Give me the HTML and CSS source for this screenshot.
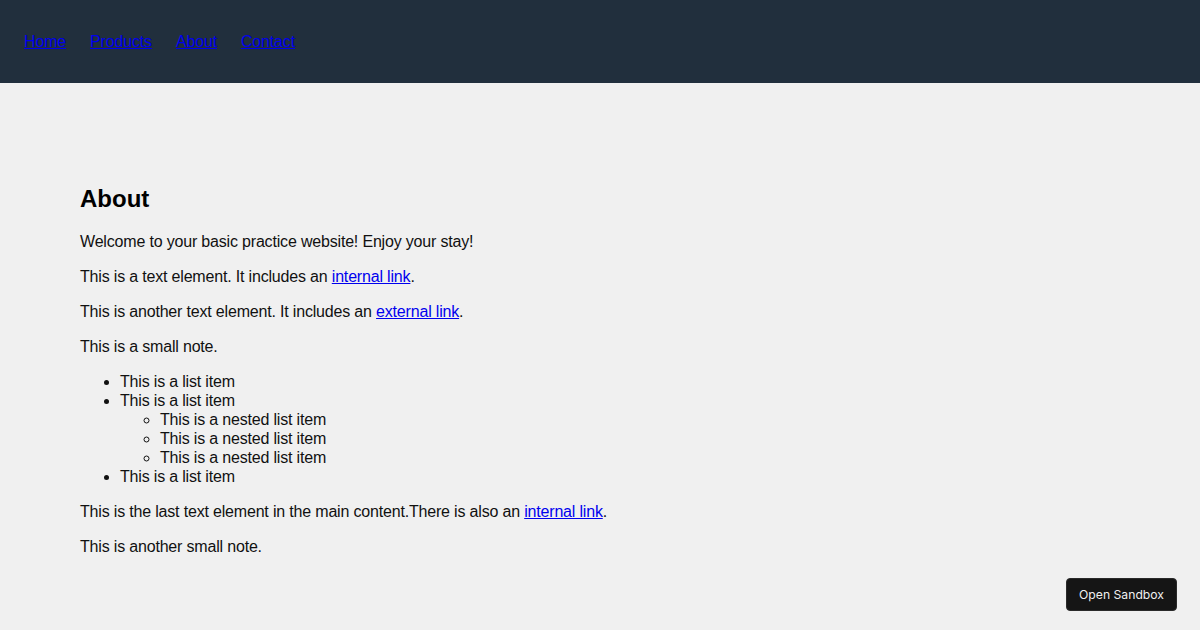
FILE: index.html
```html
<!DOCTYPE html>
<html lang="en">
<head>
<meta charset="utf-8">
<title>About</title>
<link rel="stylesheet" href="styles.css">
</head>
<body>
<header class="site-header">
  <nav class="nav">
    <a href="#">Home</a>
    <a href="#">Products</a>
    <a href="#">About</a>
    <a href="#">Contact</a>
  </nav>
</header>
<main class="content">
  <h2 class="title">About</h2>
  <p>Welcome to your basic practice website! Enjoy your stay!</p>
  <p>This is a text element. It includes an <a href="#">internal link</a>.</p>
  <p>This is another text element. It includes an <a href="#">external link</a>.</p>
  <p>This is a small note.</p>
  <ul class="list">
    <li>This is a list item</li>
    <li>This is a list item
      <ul class="nested">
        <li>This is a nested list item</li>
        <li>This is a nested list item</li>
        <li>This is a nested list item</li>
      </ul>
    </li>
    <li>This is a list item</li>
  </ul>
  <p>This is the last text element in the main content.There is also an <a href="#">internal link</a>.</p>
  <p>This is another small note.</p>
</main>
<a class="sandbox-btn" href="#">Open Sandbox</a>
</body>
</html>
```
FILE: styles.css
```css
html, body {
  margin: 0;
  padding: 0;
}
body {
  background: #f0f0f0;
  color: #111;
  font-family: "Liberation Sans", Arial, sans-serif;
  font-size: 16px;
  line-height: 19px;
  letter-spacing: -0.18px;
}
a {
  color: #0000ee;
}
.site-header {
  background: #212f3d;
  padding: 32px 24px;
  height: 19px;
}
.nav {
  display: flex;
  gap: 24px;
  line-height: 19px;
  letter-spacing: -0.16px;
}
.content {
  padding: 82px 80px 80px;
}
.title {
  font-size: 24px;
  line-height: 27.6px;
  font-weight: bold;
  letter-spacing: 0;
  margin: 19.9px 0;
  color: #000;
}
.content p {
  margin: 16px 0;
}
.list {
  margin: 16px 0;
  padding-left: 40px;
}
.nested {
  margin: 0;
  padding-left: 40px;
  list-style-type: circle;
}
.sandbox-btn {
  position: fixed;
  right: 23px;
  bottom: 19px;
  background: #151515;
  color: #f0f0f0;
  text-decoration: none;
  letter-spacing: 0;
  font-family: Inter, "Liberation Sans", sans-serif;
  font-size: 12.2px;
  line-height: 15px;
  padding: 8px 12px;
  border-radius: 4px;
  border: 1px solid #2a2a2a;
}
```
